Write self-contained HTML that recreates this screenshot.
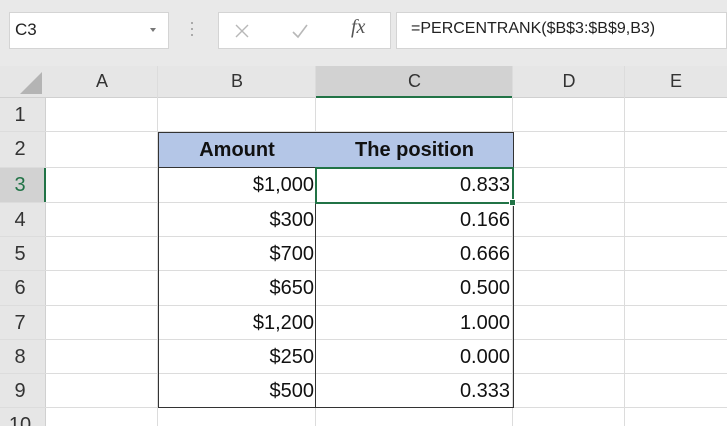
<!DOCTYPE html>
<html><head><style>
html,body{margin:0;width:727px;height:426px;overflow:hidden}
body{background:#fff;font-family:"Liberation Sans",sans-serif;position:relative}
.a{position:absolute;box-sizing:border-box}
</style></head><body>
<div class="a" style="left:0;top:0;width:727px;height:66px;background:#e9e9e9"></div>
<div class="a" style="left:9px;top:12px;width:160px;height:37px;background:#fff;border:1px solid #d4d4d4"></div>
<div class="a" style="left:15px;top:20px;font-size:17px;color:#222">C3</div>
<div class="a" style="left:150px;top:28px;width:0;height:0;border-left:3px solid transparent;border-right:3px solid transparent;border-top:4px solid #777"></div>
<div class="a" style="left:191px;top:22px;width:2px;height:2px;background:#aaa;box-shadow:0 6px #aaa,0 12px #aaa"></div>
<div class="a" style="left:218px;top:12px;width:173px;height:37px;background:#fff;border:1px solid #d4d4d4"></div>
<svg class="a" style="left:233px;top:22px" width="18" height="18"><path d="M3 3L15 15M15 3L3 15" stroke="#b8b8b8" stroke-width="1.4"/></svg>
<svg class="a" style="left:290px;top:22px" width="20" height="18"><path d="M3 10L8 15L17 3" stroke="#b8b8b8" stroke-width="1.6" fill="none"/></svg>
<div class="a" style="left:351px;top:16px;font-family:'Liberation Serif',serif;font-style:italic;font-size:20px;color:#555">fx</div>
<div class="a" style="left:396px;top:12px;width:331px;height:37px;background:#fff;border:1px solid #d4d4d4"></div>
<div class="a" style="left:411px;top:20px;font-size:16px;color:#222">=PERCENTRANK($B$3:$B$9,B3)</div>

<div class="a" style="left:0;top:66px;width:727px;height:32px;background:#e6e6e6;border-bottom:1px solid #d0d0d0"></div>
<div class="a" style="left:316px;top:66px;width:197px;height:32px;background:#d2d2d2;border-bottom:2px solid #217346"></div>
<svg class="a" style="left:18px;top:70px" width="26" height="26"><path d="M24 2L24 24L2 24Z" fill="#b4b4b4"/></svg>
<div class="a" style="left:0;top:98px;width:46px;height:328px;background:#e6e6e6;border-right:1px solid #d0d0d0"></div>
<div class="a" style="left:0;top:168px;width:46px;height:35px;background:#d2d2d2;border-right:2px solid #217346"></div>
<div id="g"></div>
<script>
var cols=[[46,158,'A'],[158,316,'B'],[316,513,'C'],[513,625,'D'],[625,800,'E']];
var rows=[98,132,168,203,237,271,306,340,374,408,442];
var h='';
cols.forEach(function(c){h+='<div class="a" style="left:'+(c[1]-1)+'px;top:66px;width:1px;height:360px;background:#dcdcdc"></div>';
h+='<div class="a" style="left:'+c[0]+'px;top:71px;width:'+(Math.min(c[1],727)-c[0])+'px;text-align:center;font-size:18px;color:#333">'+c[2]+'</div>';});
for(var i=0;i<10;i++){h+='<div class="a" style="left:0;top:'+(rows[i+1]-1)+'px;width:727px;height:1px;background:#dcdcdc"></div>';
h+='<div class="a" style="left:0;top:'+(rows[i]+6)+'px;width:40px;text-align:center;font-size:20px;color:'+(i==2?'#217346':'#333')+'">'+(i+1)+'</div>';}
h+='<div class="a" style="left:158px;top:132px;width:356px;height:36px;background:#b4c6e7;border:1px solid #333"></div>';
h+='<div class="a" style="left:158px;top:132px;width:158px;text-align:center;font-size:20px;font-weight:bold;line-height:36px;color:#111">Amount</div>';
h+='<div class="a" style="left:316px;top:132px;width:197px;text-align:center;font-size:20px;font-weight:bold;line-height:36px;color:#111">The position</div>';
h+='<div class="a" style="left:158px;top:167px;width:356px;height:241px;border:1px solid #333;border-top:none"></div>';
h+='<div class="a" style="left:315px;top:168px;width:1px;height:240px;background:#333"></div>';
var A=['$1,000','$300','$700','$650','$1,200','$250','$500'],P=['0.833','0.166','0.666','0.500','1.000','0.000','0.333'];
for(var j=0;j<7;j++){var y=rows[j+2];
h+='<div class="a" style="left:158px;top:'+y+'px;width:156px;text-align:right;font-size:20px;line-height:34px;color:#111">'+A[j]+'</div>';
h+='<div class="a" style="left:316px;top:'+y+'px;width:194px;text-align:right;font-size:20px;line-height:34px;color:#111">'+P[j]+'</div>';}
h+='<div class="a" style="left:315px;top:167px;width:199px;height:37px;border:2px solid #217346"></div>';
h+='<div class="a" style="left:509px;top:199px;width:7px;height:7px;background:#217346;border:1px solid #fff"></div>';
document.getElementById('g').innerHTML=h;
</script>
</body></html>
